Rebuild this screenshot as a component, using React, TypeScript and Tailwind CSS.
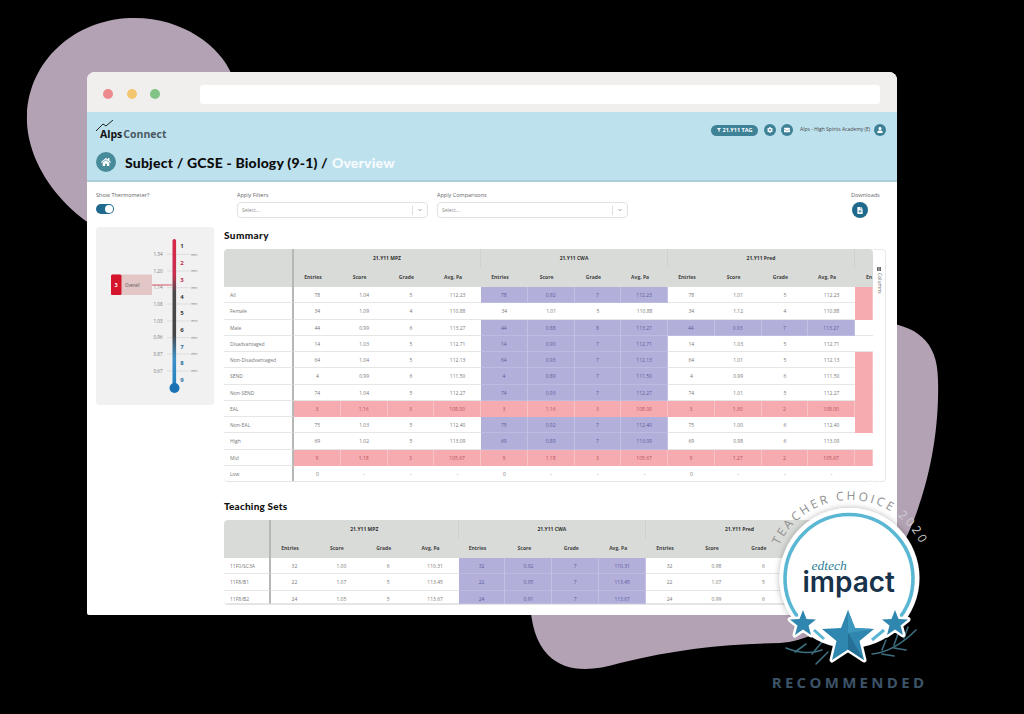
import React from 'react';
import { FaHome, FaFilter, FaCog, FaUser, FaFileAlt, FaEnvelope, FaChevronDown, FaTh } from 'react-icons/fa';

type Tone = '' | 'p' | 'r';

interface RowData {
  label: string;
  values: string[];
  tones: [Tone, Tone, Tone];
  last?: Tone;
}

const summary: RowData[] = [
  { label: 'All', values: ['78', '1.04', '5', '112.23', '78', '0.92', '7', '112.23', '78', '1.01', '5', '112.23'], tones: ['', 'p', ''], last: 'r' },
  { label: 'Female', values: ['34', '1.09', '4', '110.88', '34', '1.01', '5', '110.88', '34', '1.12', '4', '110.88'], tones: ['', '', ''], last: 'r' },
  { label: 'Male', values: ['44', '0.99', '6', '113.27', '44', '0.88', '8', '113.27', '44', '0.93', '7', '113.27'], tones: ['', 'p', 'p'] },
  { label: 'Disadvantaged', values: ['14', '1.03', '5', '112.71', '14', '0.90', '7', '112.71', '14', '1.03', '5', '112.71'], tones: ['', 'p', ''] },
  { label: 'Non-Disadvantaged', values: ['64', '1.04', '5', '112.13', '64', '0.93', '7', '112.13', '64', '1.01', '5', '112.13'], tones: ['', 'p', ''], last: 'r' },
  { label: 'SEND', values: ['4', '0.99', '6', '111.50', '4', '0.89', '7', '111.50', '4', '0.99', '6', '111.50'], tones: ['', 'p', ''], last: 'r' },
  { label: 'Non-SEND', values: ['74', '1.04', '5', '112.27', '74', '0.93', '7', '112.27', '74', '1.01', '5', '112.27'], tones: ['', 'p', ''], last: 'r' },
  { label: 'EAL', values: ['3', '1.16', '3', '108.00', '3', '1.16', '3', '108.00', '3', '1.30', '2', '108.00'], tones: ['r', 'r', 'r'], last: 'r' },
  { label: 'Non-EAL', values: ['75', '1.03', '5', '112.40', '75', '0.92', '7', '112.40', '75', '1.00', '6', '112.40'], tones: ['', 'p', ''], last: 'r' },
  { label: 'High', values: ['69', '1.02', '5', '113.09', '69', '0.89', '7', '113.09', '69', '0.98', '6', '113.09'], tones: ['', 'p', ''] },
  { label: 'Mid', values: ['9', '1.18', '3', '105.67', '9', '1.18', '3', '105.67', '9', '1.27', '2', '105.67'], tones: ['r', 'r', 'r'], last: 'r' },
  { label: 'Low', values: ['0', '-', '-', '-', '0', '-', '-', '-', '0', '-', '-', '-'], tones: ['', '', ''] },
];

const sets: RowData[] = [
  { label: '11F0/SC3A', values: ['32', '1.00', '6', '110.31', '32', '0.92', '7', '110.31', '32', '0.98', '6', '110.31'], tones: ['', 'p', ''] },
  { label: '11F8/B1', values: ['22', '1.07', '5', '113.45', '22', '0.95', '7', '113.45', '22', '1.07', '5', '113.45'], tones: ['', 'p', ''] },
  { label: '11F8/B2', values: ['24', '1.05', '5', '113.67', '24', '0.91', '7', '113.67', '24', '0.99', '6', '113.67'], tones: ['', 'p', ''] },
];

const toneClass = (tone: Tone) => {
  if (tone === 'p') return 'bg-[#b2b0da] text-[#5c5a9c] border-r border-r-[#c4c2e4] border-b-[#bdbbe0]';
  if (tone === 'r') return 'bg-[#f5abb0] text-[#b8525e] border-r border-r-[#f9c4c8] border-b-[#f5abb0]';
  return 'text-[#777] border-b-[#e6e6e6]';
};

const groups = ['21.Y11 MPZ', '21.Y11 CWA', '21.Y11 Pred'];
const cols = ['Entries', 'Score', 'Grade', 'Avg. Pa'];

const DataTable = ({ rows, gridClass, cut }: { rows: RowData[]; gridClass: string; cut?: boolean }) => (
  <div className={`grid ${gridClass} rounded-[4px] overflow-hidden border-b border-b-[#e4e4e4] text-[5px] leading-[16px] bg-white`}>
    <div className="bg-[#d9dbd8] h-[19px] border-r-2 border-r-[#b6b8b5]" />
    {groups.map((g) => (
      <div key={g} className="col-span-4 h-[19px] bg-[#d9dbd8] text-[#333] font-bold text-center leading-[19px] border-r border-r-[#cfd1ce]">{g}</div>
    ))}
    <div className="bg-[#d9dbd8] h-[19px]" />
    <div className="bg-[#d9dbd8] h-[19px] border-r-2 border-r-[#b6b8b5]" />
    {groups.map((g) =>
      cols.map((c) => (
        <div key={g + c} className="h-[19px] bg-[#d9dbd8] text-[#444] font-bold text-center leading-[19px] pr-[9px]">{c}</div>
      ))
    )}
    <div className="bg-[#d9dbd8] h-[19px] text-[#444] font-bold leading-[19px] pl-[11px] overflow-hidden">En</div>
    {rows.map((row, r) => {
      const end = cut && r === rows.length - 1;
      const h = end ? 'h-[13px]' : 'h-[16.25px]';
      return (
        <React.Fragment key={row.label}>
          <div className={`${h} pl-[6px] text-[#777] border-r-2 border-r-[#b6b8b5] border-b border-b-[#e6e6e6] overflow-hidden`}>{row.label}</div>
          {row.values.map((v, i) => (
            <div key={i} className={`${h} text-center border-b overflow-hidden ${toneClass(row.tones[Math.floor(i / 4)])}`}>{v}</div>
          ))}
          <div className={`${h} border-b ${toneClass(row.last ?? '')}`} />
        </React.Fragment>
      );
    })}
  </div>
);

const gradeColor = (i: number) => {
  if (i === 1 || i === 2) return '#c3254a';
  if (i >= 6) return '#2b6f9f';
  return '#3a3a3a';
};

const Thermometer = () => {
  const grades = [245.7, 263, 280, 297, 313, 330, 347, 363, 380];
  const ticks = [
    [254.3, '1.34'], [271, '1.20'], [287.7, '1.14'], [304, '1.08'],
    [321, '1.03'], [337.7, '0.96'], [354, '0.87'], [371, '0.67'],
  ] as [number, string][];
  return (
    <svg viewBox="96 227 118 178" className="w-[118px] h-[178px] block" style={{ fontFamily: 'Open Sans, sans-serif' }}>
      <defs>
        <linearGradient id="tube" x1="0" y1="239" x2="0" y2="388" gradientUnits="userSpaceOnUse">
          <stop offset="0" stopColor="#d8274a" />
          <stop offset="0.24" stopColor="#c8304e" />
          <stop offset="0.36" stopColor="#4a4a4a" />
          <stop offset="0.64" stopColor="#454545" />
          <stop offset="0.8" stopColor="#3f8fc7" />
          <stop offset="1" stopColor="#1f7fc0" />
        </linearGradient>
      </defs>
      {ticks.map(([y, t]) => (
        <g key={t}>
          <line x1="167" x2="190" y1={y} y2={y} stroke="#c8c8c8" strokeWidth="0.5" />
          <text x="158" y={y + 1.6} fontSize="4.6" fill="#777" textAnchor="middle">{t}</text>
          <text x="191" y={y + 1.4} fontSize="3.6" fill="#777">min</text>
        </g>
      ))}
      <rect x="172.5" y="239" width="3.6" height="148" rx="1.8" fill="url(#tube)" />
      <circle cx="174.5" cy="388" r="5" fill="#1a72b4" />
      {grades.map((y, i) => (
        <text key={i} x="182" y={y + 2.2} fontSize="6" fontWeight="700" textAnchor="middle" fill={gradeColor(i)}>{i + 1}</text>
      ))}
      <line x1="152" x2="172" y1="285" y2="285" stroke="#d2324a" strokeWidth="0.8" />
      <rect x="111" y="274.5" width="41" height="20.5" fill="#e3c6c6" />
      <rect x="111" y="274.5" width="10.5" height="20.5" rx="1.5" fill="#d4152c" />
      <text x="116" y="287" fontSize="5.5" fontWeight="700" fill="#fff" textAnchor="middle">3</text>
      <text x="125" y="286.5" fontSize="4.4" fill="#555">Overall</text>
    </svg>
  );
};

const Select = () => (
  <div className="flex items-center h-[16px] rounded-[4px] border border-[#e2e2e2] text-[#888] text-[5px] pl-[4px]">
    <span className="flex-1">Select...</span>
    <span className="w-px h-[9px] bg-[#ddd]" />
    <FaChevronDown className="w-[4px] h-[4px] mx-[5px] text-[#999]" />
  </div>
);

const IconDot = ({ children, className }: { children: React.ReactNode; className?: string }) => (
  <span className={`flex items-center justify-center rounded-full text-white ${className ?? ''}`}>{children}</span>
);

const Badge = () => (
  <svg viewBox="740 480 210 225" className="absolute left-[740px] top-[480px] w-[210px] h-[225px]">
    <defs>
      <path id="arc" d="M 772 578 A 78 78 0 1 1 928 578" fill="none" />
      <filter id="soft" x="-20%" y="-20%" width="140%" height="140%">
        <feDropShadow dx="0" dy="0" stdDeviation="3" floodColor="#000" floodOpacity="0.3" />
      </filter>
    </defs>
    <text fontSize="12" fill="#8f8f8f" letterSpacing="2.6" fontFamily="Open Sans, sans-serif">
      <textPath href="#arc" startOffset="50%" textAnchor="middle">
        TEACHER CHOICE <tspan fill="#cfcfcf">2020</tspan>
      </textPath>
    </text>
    <g stroke="#3d6f80" strokeWidth="1.6" fill="none" strokeLinecap="round">
      <path d="M 786 648 Q 806 656 822 650 M 795 652 L 806 644 M 812 654 L 822 642 M 816 664 L 828 652" />
      <path d="M 872 654 Q 894 652 916 630 M 882 650 L 886 640 M 894 645 L 898 634 M 904 638 L 908 627 M 882 654 L 894 656 M 894 648 L 906 650" />
    </g>
    <circle cx="849.5" cy="578" r="70" fill="#fff" filter="url(#soft)" />
    <path d="M 802 622 A 64 64 0 1 1 896 622" fill="none" stroke="#5ab7d4" strokeWidth="3.6" />
    <path d="M 814 630 L 824 639 M 884 630 L 872 640" stroke="#5ab7d4" strokeWidth="3" />
    <text x="811.5" y="570" fontSize="13.5" fontStyle="italic" fill="#2a7f96" fontFamily="Liberation Serif, serif">edtech</text>
    <text x="802.5" y="591.5" fontSize="28" fontWeight="600" fill="#17324a" fontFamily="Inter, sans-serif" textLength="92.5" lengthAdjust="spacingAndGlyphs">impact</text>
    <g stroke="#fff" strokeWidth="5" strokeLinejoin="round" paintOrder="stroke" fill="#2f86ae">
      <polygon points="803,610 806.5,619 816,619.5 808.5,625.5 811,635 803,629.5 795,635 797.5,625.5 790,619.5 799.5,619" />
      <polygon points="895,610 898.5,619 908,619.5 900.5,625.5 903,635 895,629.5 887,635 889.5,625.5 882,619.5 891.5,619" />
      <polygon points="848,610 855,628 874,629 859.5,641 864,660 848,649.5 832,660 836.5,641 822,629 841,628" />
    </g>
    <polygon points="848,610 848,633 874,629 855,628" fill="#3d98bf" />
    <polygon points="848,633 864,660 848,649.5" fill="#256f96" />
    <text x="849.5" y="688" fontSize="15" fontWeight="700" fill="#3c5368" textAnchor="middle" letterSpacing="3.3" fontFamily="Open Sans, sans-serif">RECOMMENDED</text>
  </svg>
);

export default function App() {
  return (
    <div className="relative w-[1024px] h-[714px] bg-black overflow-hidden" style={{ fontFamily: 'Open Sans, sans-serif' }}>
      <svg viewBox="0 0 1024 714" className="absolute inset-0 w-[1024px] h-[714px]">
        <path d="M 130 18 C 180 16 220 45 232 75 L 120 240 C 60 215 25 160 27 115 C 29 60 75 20 130 18 Z" fill="#b3a2b4" />
        <path d="M 880 322 C 915 325 938 340 938 380 C 940 450 920 510 905 540 C 880 590 830 640 780 643 C 730 644 680 648 620 663 C 590 672 565 672 548 655 C 536 642 531 625 530 600 L 600 500 Z" fill="#b3a2b4" />
      </svg>

      <div className="relative ml-[87px] mt-[72px] w-[810px] h-[543px] bg-white rounded-t-[8px] rounded-b-[2px] overflow-hidden">
        <div className="h-[40px] bg-[#f0efed] flex items-center pl-[16px] pr-[17px] pt-[4px]">
          <span className="w-[10px] h-[10px] rounded-full bg-[#ec8a8e]" />
          <span className="w-[10px] h-[10px] rounded-full bg-[#f3c76f] ml-[14px]" />
          <span className="w-[10px] h-[10px] rounded-full bg-[#82c486] ml-[13px]" />
          <div className="flex-1 h-[19px] bg-white rounded-[3px] ml-[40px]" />
        </div>

        <div className="h-[70px] bg-[#bee1ee] border-b-2 border-b-[#aecfda] pl-[9px] pr-[11px]">
          <div className="flex items-start justify-between h-[40px] pt-[9px]">
            <div className="relative flex items-end h-[20px] text-[10.5px] font-bold leading-[13px] pl-[4px]">
              <svg viewBox="0 0 18 12" className="absolute left-0 top-[-1px] w-[18px] h-[12px]" fill="none" stroke="#222" strokeWidth="1">
                <path d="M 0 11 L 7 4 L 10 6 L 17 0" />
              </svg>
              <span className="text-[#111]">Alps</span>
              <span className="text-[#4a5a62] ml-[1px]">Connect</span>
            </div>
            <div className="flex items-center text-[5px] text-[#444] h-[12px] mt-[3px]">
              <span className="flex items-center justify-center gap-[2px] w-[47px] h-[11px] rounded-full bg-[#3d8296] text-white font-bold text-[5.5px]">
                <FaFilter className="w-[4px] h-[4px]" />21.Y11 TAG
              </span>
              <IconDot className="w-[12px] h-[12px] bg-[#3d8296] ml-[6px]"><FaCog className="w-[6px] h-[6px]" /></IconDot>
              <IconDot className="w-[12px] h-[12px] bg-[#3d8296] ml-[5px]"><FaEnvelope className="w-[6px] h-[6px]" /></IconDot>
              <span className="ml-[7px] w-[72px] whitespace-nowrap">Alps - High Spirits Academy (E)</span>
              <IconDot className="w-[12px] h-[12px] bg-[#3d8296] ml-[2px]"><FaUser className="w-[6px] h-[6px]" /></IconDot>
            </div>
          </div>
          <div className="flex items-center h-[20px] text-[14px] font-black tracking-[0.2px]" style={{ fontFamily: 'Lato, sans-serif' }}>
            <IconDot className="w-[20px] h-[20px] bg-[#478b9a]"><FaHome className="w-[10px] h-[10px]" /></IconDot>
            <span className="text-[#0c0c0c] ml-[9px] whitespace-nowrap">Subject / GCSE - Biology (9-1) /</span>
            <span className="text-[#f7fbfd] ml-[4px]">Overview</span>
          </div>
        </div>

        <div className="flex h-[45px] pt-[10px] text-[5.5px] leading-[7px] text-[#666]">
          <div className="w-[150px] pl-[9px]">
            <div>Show Thermometer?</div>
            <div className="flex justify-end items-center w-[18px] h-[10px] mt-[5px] rounded-full bg-[#1f6a8c] pr-[1px]">
              <span className="w-[8px] h-[8px] rounded-full bg-white" />
            </div>
          </div>
          <div className="w-[191px]">
            <div className="mb-[3px]">Apply Filters</div>
            <Select />
          </div>
          <div className="w-[191px] ml-[9px]">
            <div className="mb-[3px]">Apply Comparisons</div>
            <Select />
          </div>
          <div className="ml-[223px]">
            <div>Downloads</div>
            <IconDot className="w-[16px] h-[16px] bg-[#1f6a8c] mt-[3px] ml-[1px]"><FaFileAlt className="w-[6px] h-[7px]" /></IconDot>
          </div>
        </div>

        <div className="flex">
          <div className="w-[118px] h-[178px] ml-[9px] bg-[#f1f1f1] rounded-[3px]">
            <Thermometer />
          </div>
          <div className="w-[662px] ml-[10px]">
            <h2 className="h-[22px] text-[10px] font-black leading-[16px] text-[#111] tracking-[0.4px]" style={{ fontFamily: 'Lato, sans-serif' }}>Summary</h2>
            <div className="flex h-[233px]">
              <DataTable rows={summary} gridClass="grid-cols-[70px_repeat(12,46.75px)_18px] w-[649px]" />
              <div className="flex-1 flex justify-center rounded-r-[4px] border border-l-0 border-[#e8e8e8] pt-[17px]">
                <span className="flex items-center gap-[2px] text-[#666] text-[5px] h-fit [writing-mode:vertical-rl]">
                  <FaTh className="w-[4px] h-[4px] text-[#333]" />Columns
                </span>
              </div>
            </div>
            <h2 className="h-[38px] pt-[17px] text-[10px] font-black leading-[14px] text-[#111] tracking-[0.2px]" style={{ fontFamily: 'Lato, sans-serif' }}>Teaching Sets</h2>
            <DataTable rows={sets} gridClass="grid-cols-[47px_repeat(12,46.9px)_52px] w-[662px]" cut />
          </div>
        </div>
      </div>

      <Badge />
    </div>
  );
}
